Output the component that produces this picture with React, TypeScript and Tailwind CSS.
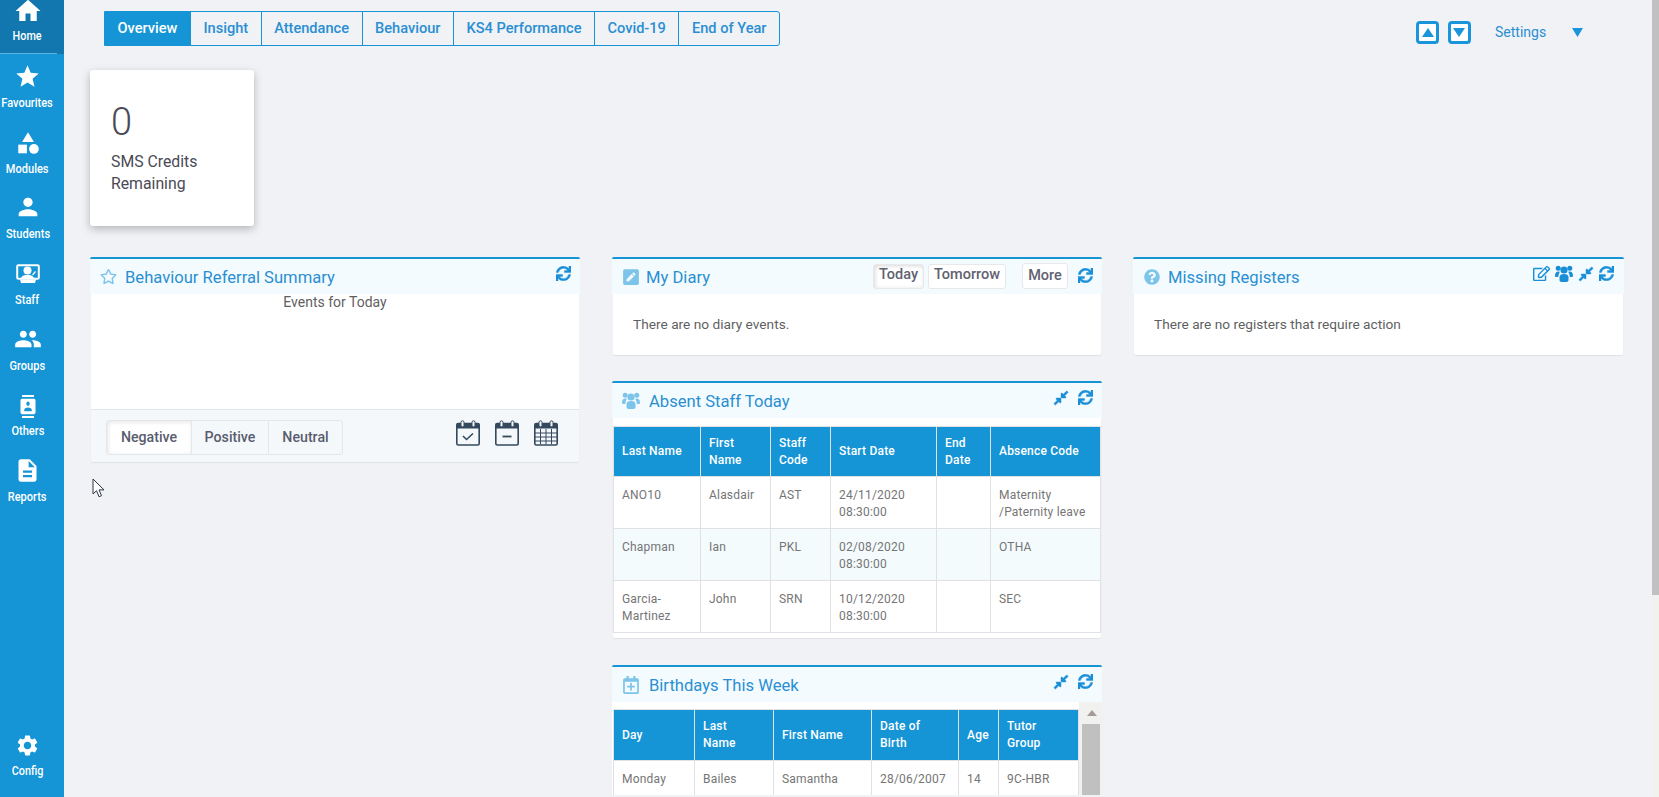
import type { ReactNode } from 'react'
import {
  FaSync,
  FaRegStar,
  FaPenSquare,
  FaQuestionCircle,
  FaRegEdit,
  FaCompressAlt,
  FaRegCalendarPlus,
} from 'react-icons/fa'
import {
  MdHome,
  MdStar,
  MdCategory,
  MdPerson,
  MdPeople,
  MdContacts,
  MdDescription,
  MdSettings,
} from 'react-icons/md'

// ===== SIDEBAR =====

function StaffIcon() {
  return (
    <svg className="mb-[3px]" width="24" height="20" viewBox="0 0 24 20" fill="none">
      <rect x="1.2" y="1.2" width="21.6" height="13.6" rx="1" stroke="white" strokeWidth="2" />
      <circle cx="11.5" cy="6.5" r="4" fill="white" />
      <path d="M5 14c1-2.6 3.6-3 6.5-3s5.500.4 6.500 3z" fill="white" />
      <path d="M16.500 11l3-3.500" stroke="white" strokeWidth="1.200" />
      <path d="M4 15.500h16l-1 3.500H5z" fill="white" />
    </svg>
  )
}

const NAV_ITEMS: { label: string; icon: ReactNode }[] = [
  { label: 'Favourites', icon: <MdStar size={27} /> },
  { label: 'Modules', icon: <MdCategory size={26} /> },
  { label: 'Students', icon: <MdPerson size={28} /> },
  { label: 'Staff', icon: <StaffIcon /> },
  { label: 'Groups', icon: <MdPeople size={28} /> },
  { label: 'Others', icon: <MdContacts className="w-[18px] h-[23px]" preserveAspectRatio="none" /> },
  { label: 'Reports', icon: <MdDescription size={27} /> },
]

function NavItem({ label, icon }: { label: string; icon: ReactNode }) {
  return (
    <div className="h-[65.7px] w-[55px] shrink-0 flex flex-col items-center text-white">
      <div className="h-[42px] flex items-end justify-center">{icon}</div>
      <div className="mt-[5px] text-[12px] leading-[16px] font-medium scale-x-[0.92] whitespace-nowrap">{label}</div>
    </div>
  )
}

function Sidebar() {
  return (
    <div className="w-16 shrink-0 h-full bg-[#1594d6] flex flex-col justify-between overflow-hidden">
      <div>
        <div className="h-[54px] bg-[#1277ae] relative pr-[9px] flex flex-col items-center text-white overflow-hidden">
          <div className="h-[26px] flex items-end justify-center">
            <MdHome size={30} />
          </div>
          <div className="mt-[2px] text-[12px] leading-[16px] font-medium scale-x-[0.9]">Home</div>
          <div className="absolute left-0 bottom-0 w-[57px] h-px bg-[#5db4e2]" />
        </div>
        <div className="-mt-[6px]">
          {NAV_ITEMS.map((item) => (
            <NavItem key={item.label} {...item} />
          ))}
        </div>
      </div>
      <div className="h-[64px] w-[55px] flex flex-col items-center text-white">
        <MdSettings size={25} />
        <div className="mt-[5px] text-[12px] leading-[16px] font-medium scale-x-[0.9]">Config</div>
      </div>
    </div>
  )
}

// ===== TOP BAR =====

const TABS = ['Overview', 'Insight', 'Attendance', 'Behaviour', 'KS4 Performance', 'Covid-19', 'End of Year']

function TabBar() {
  return (
    <div className="flex h-[35px] rounded-r-[3px] border border-[#1594d6] text-[14.600px] font-medium text-[#2a8fd2]">
      {TABS.map((tab, i) => (
        <div
          key={tab}
          className={
            i === 0
              ? 'px-[12.500px] flex items-center bg-[#1594d6] text-white'
              : 'px-[12.500px] flex items-center border-l border-[#1594d6] whitespace-nowrap'
          }
        >
          {tab}
        </div>
      ))}
    </div>
  )
}

function MoveButton({ up }: { up?: boolean }) {
  return (
    <div className="w-[23px] h-[23px] rounded-[4px] border-[3px] border-[#1a95dc] bg-white flex items-center justify-center">
      <svg width="12" height="9" viewBox="0 0 12 9">
        <path d={up ? 'M6 0l6 9H0z' : 'M0 0h12L6 9z'} fill="#1a95dc" />
      </svg>
    </div>
  )
}

function SettingsControls() {
  return (
    <div className="flex items-center pt-[8px]">
      <MoveButton up />
      <div className="w-[8.500px]" />
      <MoveButton />
      <div className="ml-[24.500px] w-[77px] text-[14px] text-[#2a8fd2]">Settings</div>
      <svg width="11" height="9" viewBox="0 0 11 9">
        <path d="M0 0h11L5.500 9z" fill="#1a95dc" />
      </svg>
    </div>
  )
}

// ===== PANEL =====

// FontAwesome 4 style group icon, the FA5 one in react-icons is much flatter
function UsersIcon() {
  return (
    <svg width="18" height="17" viewBox="0 0 18 17" fill="currentColor">
      <circle cx="9" cy="5" r="3.600" />
      <circle cx="3.200" cy="3.300" r="2.500" />
      <circle cx="14.800" cy="3.300" r="2.500" />
      <path d="M4.500 15V12.500C4.500 10 6 9 9 9s4.500 1 4.500 3.500V15c0 1.200-.8 2-2 2h-5c-1.200 0-2-.8-2-2z" />
      <path d="M0 10.500C0 8 1.500 6.500 3.200 6.500c.5 0 1 .1 1.400.3C4.700 8 3.500 9 3.300 12H1c-.6 0-1-.6-1-1.500z" />
      <path d="M18 10.500C18 8 16.500 6.500 14.800 6.500c-.5 0-1 .1-1.400.3.100 1.200 1.300 2.200 1.500 5.200H17c.6 0 1-.6 1-1.500z" />
    </svg>
  )
}

interface PanelProps {
  icon: ReactNode
  title: string
  actions?: ReactNode
  children: ReactNode
  className?: string
}

function Panel({ icon, title, actions, children, className = '' }: PanelProps) {
  return (
    <div className={`border-t-[2px] border-[#1594d6] rounded-t-[2px] ${className}`}>
      <div className="h-[35px] bg-[#f4fbfe] flex items-center pl-[10px] pr-[9px]">
        <div className="text-[#7cc4ea] shrink-0 flex items-center">{icon}</div>
        <div className="text-[16.600px] text-[#2a8fd2] ml-[9px] pt-[3px] whitespace-nowrap">{title}</div>
        <div className="ml-auto flex items-center gap-[9px] text-[#1a8fd8] pb-[6px]">{actions}</div>
      </div>
      {children}
    </div>
  )
}

const Refresh = () => <FaSync size={15} className="stroke-[15]" />
const Compress = () => <FaCompressAlt size={16} className="stroke-[15]" />

function Message({ children }: { children: ReactNode }) {
  return (
    <div className="h-[61px] mx-px bg-white rounded-b-[2px] shadow-[0_1px_1px_#dfe2e7] pl-[20px] pt-[20px] text-[13.700px] leading-[20px] text-[#5f5f5f]">
      {children}
    </div>
  )
}

// ===== BEHAVIOUR PANEL =====

function CalendarIcon({ children }: { children: ReactNode }) {
  return (
    <svg width="24" height="26" viewBox="0 0 24 26" fill="none">
      <rect x="0.800" y="3.500" width="22.400" height="21.500" rx="1.500" stroke="#34495e" strokeWidth="1.600" />
      <rect x="0.800" y="3.500" width="22.400" height="5" fill="#34495e" />
      <rect x="5" y="0.800" width="3" height="6" rx="1.500" fill="#f5f8fb" stroke="#34495e" />
      <rect x="16" y="0.800" width="3" height="6" rx="1.500" fill="#f5f8fb" stroke="#34495e" />
      {children}
    </svg>
  )
}

function BehaviourPanel() {
  return (
    <Panel
      icon={<FaRegStar size={17} className="-mr-[1px]" />}
      title="Behaviour Referral Summary"
      actions={<Refresh />}
    >
      <div className="mx-px h-[116px] bg-white border-b border-[#e1e4e8] text-center text-[14px] text-[#5f5f5f] leading-[17px]">
        Events for Today
      </div>
      <div className="mx-px h-[52px] bg-[#f5f8fb] rounded-b-[2px] shadow-[0_1px_1px_#dfe2e7] flex items-start pt-[10px] pl-[15px] pr-[21px]">
        <div className="flex h-[35px] border border-[#e4e7ea] rounded-[3px] text-[14.200px] font-medium text-[#585c6e]">
          <div className="w-[85px] flex items-center justify-center bg-white border-r border-[#e4e7ea] rounded-l-[3px] shadow-[inset_1px_1px_4px_#e4e4e4]">Negative</div>
          <div className="w-[77px] flex items-center justify-center border-r border-[#e4e7ea]">Positive</div>
          <div className="w-[73px] flex items-center justify-center">Neutral</div>
        </div>
        <div className="ml-auto flex gap-[15px]">
          <CalendarIcon>
            <path d="M7 16l3.500 3.500L17 13.500" stroke="#34495e" strokeWidth="1.600" />
          </CalendarIcon>
          <CalendarIcon>
            <path d="M7.500 16.500h9" stroke="#34495e" strokeWidth="1.800" />
          </CalendarIcon>
          <CalendarIcon>
            <path d="M1 13h22M1 17h22M1 21h22M6.500 9v15M12 9v15M17.500 9v15" stroke="#34495e" strokeWidth="1" />
          </CalendarIcon>
        </div>
      </div>
    </Panel>
  )
}

// ===== TABLES =====

interface DataTableProps {
  widths: number[]
  heads: string[]
  rows: string[][]
  headHeight: number
  rowHeights: number[]
}

function DataTable({ widths, heads, rows, headHeight, rowHeights }: DataTableProps) {
  return (
    <table className="table-fixed border-collapse text-[12px] leading-[17px] tracking-[0.2px]">
      <colgroup>
        {widths.map((w, i) => (
          <col key={i} style={{ width: w }} />
        ))}
      </colgroup>
      <thead>
        <tr style={{ height: headHeight }}>
          {heads.map((h) => (
            <th key={h} className="bg-[#1594d6] border border-[#dfe1e4] px-[8px] text-left font-medium text-white align-middle whitespace-pre-line">
              {h}
            </th>
          ))}
        </tr>
      </thead>
      <tbody>
        {rows.map((row, r) => (
          <tr key={r} style={{ height: rowHeights[r] }} className={r % 2 === 1 ? 'bg-[#f4fbfd]' : 'bg-white'}>
            {row.map((cell, c) => (
              <td key={c} className="border border-[#dfe1e4] px-[8px] pt-[10px] pb-[7px] align-top text-[#757575]">
                {cell}
              </td>
            ))}
          </tr>
        ))}
      </tbody>
    </table>
  )
}

const ABSENT_HEADS = ['Last Name', 'First Name', 'Staff Code', 'Start Date', 'End Date', 'Absence Code']
const ABSENT_ROWS = [
  ['ANO10', 'Alasdair', 'AST', '24/11/2020 08:30:00', '', 'Maternity /Paternity leave'],
  ['Chapman', 'Ian', 'PKL', '02/08/2020 08:30:00', '', 'OTHA'],
  ['Garcia-Martinez', 'John', 'SRN', '10/12/2020 08:30:00', '', 'SEC'],
]

const BIRTHDAY_HEADS = ['Day', 'Last\nName', 'First Name', 'Date of Birth', 'Age', 'Tutor Group']
const BIRTHDAY_ROWS = [['Monday', 'Bailes', 'Samantha', '28/06/2007', '14', '9C-HBR']]

function DiaryButton({ children, active, className = '' }: { children: ReactNode; active?: boolean; className?: string }) {
  return (
    <div
      className={`h-[25px] flex items-center justify-center bg-white border border-[#e6e8ea] rounded-[3px] text-[14.500px] font-medium text-[#5f6270] ${
        active ? 'shadow-[inset_1px_1px_4px_#d8d8d8]' : ''
      } ${className}`}
    >
      {children}
    </div>
  )
}

function MiddleColumn() {
  return (
    <div className="w-[490px] shrink-0 flex flex-col">
      <Panel
        icon={<FaPenSquare size={18} className="-mr-[3px]" />}
        title="My Diary"
        actions={
          <div className="flex items-center pt-[5px]">
            <DiaryButton active className="w-[51px] pb-[2px]">Today</DiaryButton>
            <DiaryButton className="w-[78px] ml-[4px] pb-[2px]">Tomorrow</DiaryButton>
            <DiaryButton className="w-[46px] ml-[16px] h-[26px]">More</DiaryButton>
            <div className="ml-[10px] mb-px"><Refresh /></div>
          </div>
        }
      >
        <Message>There are no diary events.</Message>
      </Panel>

      <Panel
        className="mt-[26px]"
        icon={<UsersIcon />}
        title="Absent Staff Today"
        actions={<><Compress /><Refresh /></>}
      >
        <div className="mx-px bg-white rounded-b-[2px] shadow-[0_1px_1px_#dfe2e7] pt-[8px] pb-[5px]">
          <DataTable
            widths={[87, 70, 60, 106, 54, 110]}
            heads={ABSENT_HEADS}
            rows={ABSENT_ROWS}
            headHeight={50}
            rowHeights={[52, 52, 51]}
          />
        </div>
      </Panel>

      <Panel
        className="mt-[27px]"
        icon={<FaRegCalendarPlus size={18} />}
        title="Birthdays This Week"
        actions={<><Compress /><Refresh /></>}
      >
        <div className="flex h-[93px] overflow-hidden">
          <div className="w-[467px] bg-white pt-[7px] pl-[1px]">
            <DataTable
              widths={[81, 79, 98, 87, 40, 80]}
              heads={BIRTHDAY_HEADS}
              rows={BIRTHDAY_ROWS}
              headHeight={51}
              rowHeights={[34]}
            />
          </div>
          <div className="w-[23px] bg-[#f1f1ef] pl-[3px] flex flex-col items-center">
            <div className="h-[22px] w-full flex items-center justify-center">
              <svg width="10" height="6" viewBox="0 0 10 6">
                <path d="M5 0l5 6H0z" fill="#a39c98" />
              </svg>
            </div>
            <div className="flex-1 w-[18px] mr-[2px] bg-[#bfc0bf]" />
          </div>
        </div>
      </Panel>
    </div>
  )
}

// ===== APP =====

export default function App() {
  return (
    <div className="relative w-[1659px] h-[797px] overflow-hidden flex bg-[#f0f2f6] font-['Roboto',sans-serif]">
      <Sidebar />

      <div className="flex-1 min-w-0">
        <div className="flex justify-between pt-[11px] pl-[40px] pr-[69px]">
          <TabBar />
          <SettingsControls />
        </div>

        <div className="ml-[26px] mt-[24px] w-[164px] h-[156px] bg-white rounded-[3px] shadow-[0_3px_8px_rgba(0,0,0,0.25)] pl-[21px] pt-[31px] text-[#4a4a56]">
          <div className="text-[38px] leading-[42px] font-light">0</div>
          <div className="mt-[8px] text-[15.800px] leading-[22px]">
            SMS Credits<br />Remaining
          </div>
        </div>

        <div className="flex items-start ml-[26px] mt-[31px]">
          <div className="w-[490px] shrink-0">
            <BehaviourPanel />
          </div>
          <div className="w-[32px] shrink-0" />
          <MiddleColumn />
          <div className="w-[31px] shrink-0" />
          <div className="w-[491px] shrink-0">
            <Panel
              icon={<FaQuestionCircle size={16} className="ml-[1px] -mr-[1px]" />}
              title="Missing Registers"
              actions={
                <div className="flex items-center gap-[5px] pr-[1px]">
                  <FaRegEdit size={17} />
                  <UsersIcon />
                  <Compress />
                  <Refresh />
                </div>
              }
            >
              <Message>There are no registers that require action</Message>
            </Panel>
          </div>
        </div>
      </div>

      <div className="w-[7px] shrink-0 h-full bg-[#f1f1ef]">
        <div className="h-[595px] bg-[#bfc0bf]" />
      </div>

      {/* mouse cursor in the capture */}
      <svg className="absolute left-[92px] top-[478px]" width="13" height="20" viewBox="0 0 13 20">
        <path d="M1 1v15l3.500-3.300 2.500 6 2.500-1-2.500-5.800h5z" fill="white" stroke="#2c3545" strokeWidth="1" />
      </svg>
    </div>
  )
}
